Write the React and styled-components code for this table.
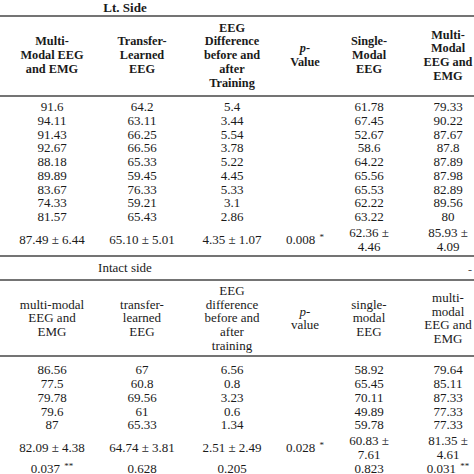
import React from "react";
import styled, { createGlobalStyle } from "styled-components";

const GlobalStyle = createGlobalStyle`
  html, body {
    margin: 0;
    padding: 0;
    background: #fff;
    overflow: hidden;
  }
  body {
    font-family: "Liberation Serif", "Times New Roman", serif;
    color: #1a1a1a;
  }
`;

// column widths shared by header and body rows
const COLS = "104px 76px 104px 42px 86px 72px";
const RULE = "2px solid #747474";

const Page = styled.div`
  width: 474px;
  height: 474px;
  overflow: hidden;
  background: #fff;
`;

const CaptionRow = styled.div`
  display: flex;
  align-items: center;
  justify-content: space-between;
  height: ${(p) => p.$h}px;
  border-bottom: ${RULE};
`;

const Caption = styled.div`
  width: 250px;
  text-align: center;
  font-size: 13px;
  line-height: 14px;
  font-weight: ${(p) => (p.$bold ? 700 : 400)};
`;

const EdgeMark = styled.span`
  font-size: 12px;
  line-height: 12px;
  color: #555;
  margin-right: 2px;
  margin-top: 4px;
`;

const HeadRow = styled.div`
  display: grid;
  grid-template-columns: ${COLS};
  align-items: center;
  height: ${(p) => p.$h}px;
  border-bottom: ${RULE};
`;

const HeadCell = styled.div`
  text-align: center;
  font-size: ${(p) => (p.$bold ? 12.3 : 13)}px;
  line-height: 13.75px;
  font-weight: ${(p) => (p.$bold ? 700 : 400)};
  white-space: nowrap;

  i {
    font-style: italic;
  }
`;

const Body = styled.div`
  padding-top: ${(p) => p.$top}px;
  padding-bottom: ${(p) => p.$bottom || 0}px;
  border-bottom: ${(p) => (p.$rule ? RULE : "none")};
`;

const Row = styled.div`
  display: grid;
  grid-template-columns: ${COLS};
  align-items: center;
  margin-top: ${(p) => p.$gap || 0}px;
`;

const Cell = styled.div`
  text-align: center;
  font-size: 13px;
  line-height: 13.75px;
  white-space: nowrap;
`;

const Star = styled.sup`
  font-size: 9px;
  line-height: 0;
  vertical-align: 4px;
  margin-left: 1px;
`;

const withStars = (v) => {
  if (typeof v !== "string" || !v.includes("*")) return v;
  const [num, stars] = v.split(" ");
  return (
    <>
      {num} <Star>{stars}</Star>
    </>
  );
};

const renderCell = (v, i) => (
  <Cell key={i}>
    {Array.isArray(v)
      ? v.map((line, j) => (
          <React.Fragment key={j}>
            {j > 0 && <br />}
            {line}
          </React.Fragment>
        ))
      : withStars(v)}
  </Cell>
);

const lines = (arr) =>
  arr.map((l, i) => (
    <React.Fragment key={i}>
      {i > 0 && <br />}
      {l}
    </React.Fragment>
  ));

const ltHeaders = [
  ["Multi-", "Modal EEG", "and EMG"],
  ["Transfer-", "Learned", "EEG"],
  ["EEG", "Difference", "before and", "after", "Training"],
  [<span key="p"><i>p</i>-</span>, "Value"],
  ["Single-", "Modal", "EEG"],
  ["Multi-", "Modal", "EEG and", "EMG"],
];

const intactHeaders = [
  ["multi-modal", "EEG and", "EMG"],
  ["transfer-", "learned", "EEG"],
  ["EEG", "difference", "before and", "after", "training"],
  [<span key="p"><i>p</i>-</span>, "value"],
  ["single-", "modal", "EEG"],
  ["multi-", "modal", "EEG and", "EMG"],
];

const ltRows = [
  ["91.6", "64.2", "5.4", "", "61.78", "79.33"],
  ["94.11", "63.11", "3.44", "", "67.45", "90.22"],
  ["91.43", "66.25", "5.54", "", "52.67", "87.67"],
  ["92.67", "66.56", "3.78", "", "58.6", "87.8"],
  ["88.18", "65.33", "5.22", "", "64.22", "87.89"],
  ["89.89", "59.45", "4.45", "", "65.56", "87.98"],
  ["83.67", "76.33", "5.33", "", "65.53", "82.89"],
  ["74.33", "59.21", "3.1", "", "62.22", "89.56"],
  ["81.57", "65.43", "2.86", "", "63.22", "80"],
];

const ltMean = [
  "87.49 ± 6.44",
  "65.10 ± 5.01",
  "4.35 ± 1.07",
  "0.008 *",
  ["62.36 ±", "4.46"],
  ["85.93 ±", "4.09"],
];

const intactRows = [
  ["86.56", "67", "6.56", "", "58.92", "79.64"],
  ["77.5", "60.8", "0.8", "", "65.45", "85.11"],
  ["79.78", "69.56", "3.23", "", "70.11", "87.33"],
  ["79.6", "61", "0.6", "", "49.89", "77.33"],
  ["87", "65.33", "1.34", "", "59.78", "77.33"],
];

const intactMean = [
  "82.09 ± 4.38",
  "64.74 ± 3.81",
  "2.51 ± 2.49",
  "0.028 *",
  ["60.83 ±", "7.61"],
  ["81.35 ±", "4.61"],
];

const intactP = ["0.037 **", "0.628", "0.205", "", "0.823", "0.031 **"];

export default function App() {
  return (
    <Page>
      <GlobalStyle />

      <CaptionRow $h={15}>
        <Caption $bold>Lt. Side</Caption>
      </CaptionRow>
      <HeadRow $h={78}>
        {ltHeaders.map((h, i) => (
          <HeadCell key={i} $bold>
            {lines(h)}
          </HeadCell>
        ))}
      </HeadRow>
      <Body $top={3} $bottom={2} $rule>
        {ltRows.map((r, i) => (
          <Row key={i}>{r.map(renderCell)}</Row>
        ))}
        <Row $gap={2}>{ltMean.map(renderCell)}</Row>
      </Body>

      <CaptionRow $h={22}>
        <Caption>Intact side</Caption>
        <EdgeMark>-</EdgeMark>
      </CaptionRow>
      <HeadRow $h={74}>
        {intactHeaders.map((h, i) => (
          <HeadCell key={i}>{lines(h)}</HeadCell>
        ))}
      </HeadRow>
      <Body $top={6}>
        {intactRows.map((r, i) => (
          <Row key={i}>{r.map(renderCell)}</Row>
        ))}
        <Row $gap={2}>{intactMean.map(renderCell)}</Row>
        <Row>{intactP.map(renderCell)}</Row>
      </Body>
    </Page>
  );
}
